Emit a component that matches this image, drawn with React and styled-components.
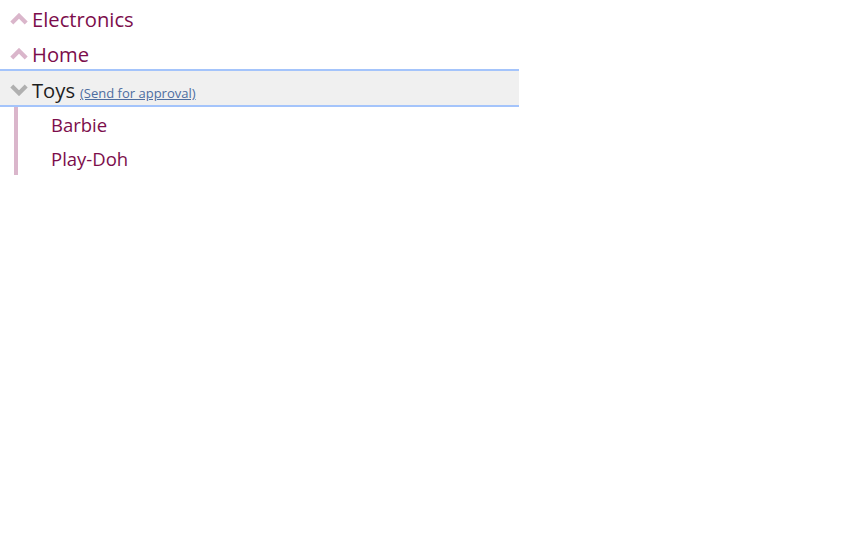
import React from "react";
import styled, { createGlobalStyle } from "styled-components";

const Global = createGlobalStyle`
  html, body { margin: 0; padding: 0; background: #fff; }
  body { font-family: "Open Sans", "Liberation Sans", sans-serif; }
`;

const Tree = styled.ul`
  list-style: none;
  margin: 0;
  padding: 0;
  width: 519px;
`;

const Row = styled.div`
  box-sizing: border-box;
  display: flex;
  align-items: center;
  height: ${(p) => (p.$active ? "38px" : "34.5px")};
  padding: 4px 0 0 9px;
  background: ${(p) => (p.$active ? "#f0f0f0" : "transparent")};
  border-top: ${(p) => (p.$active ? "2px solid #a4c4fb" : "none")};
  border-bottom: ${(p) => (p.$active ? "2px solid #a4c4fb" : "none")};
`;

const Toggle = styled.span`
  display: inline-flex;
  width: 20px;
  justify-content: center;
  margin-right: 3px;
  color: ${(p) => (p.$open ? "#b0b0b0" : "#dab6cb")};
`;

const Label = styled.span`
  font-size: 20.2px;
  color: ${(p) => (p.$active ? "#1e1e1e" : "#7c0d4b")};
`;

const Link = styled.a`
  font-size: 13px;
  color: #4d6da0;
  text-decoration: underline;
  margin-left: 5px;
  align-self: center;
  padding-top: 6px;
`;

const Children = styled.ul`
  list-style: none;
  margin: 0 0 0 14px;
  padding: 0;
  border-left: 4px solid #dab6cb;
`;

const Child = styled.li`
  height: 34px;
  display: flex;
  align-items: center;
  padding-left: 33px;
  font-size: 18.5px;
  color: #7c0d4b;
`;

const Chevron = ({ dir }) => (
  <svg width="18" height="12" viewBox="0 0 18 12">
    <polyline
      points={dir === "up" ? "1.8,10 9,2.8 16.2,10" : "1.8,2 9,9.2 16.2,2"}
      fill="none"
      stroke="currentColor"
      strokeWidth="4.2"
      strokeLinecap="butt"
      strokeLinejoin="miter"
    />
  </svg>
);

const items = [
  { name: "Electronics" },
  { name: "Home" },
  { name: "Toys", open: true, link: "(Send for approval)", children: ["Barbie", "Play-Doh"] },
];

export default function App() {
  return (
    <>
      <Global />
      <Tree>
        {items.map((it) => (
          <li key={it.name}>
            <Row $active={it.open}>
              <Toggle $open={it.open}>
                <Chevron dir={it.open ? "down" : "up"} />
              </Toggle>
              <Label $active={it.open}>{it.name}</Label>
              {it.link && <Link href="#">{it.link}</Link>}
            </Row>
            {it.children && (
              <Children>
                {it.children.map((c) => (
                  <Child key={c}>{c}</Child>
                ))}
              </Children>
            )}
          </li>
        ))}
      </Tree>
    </>
  );
}
